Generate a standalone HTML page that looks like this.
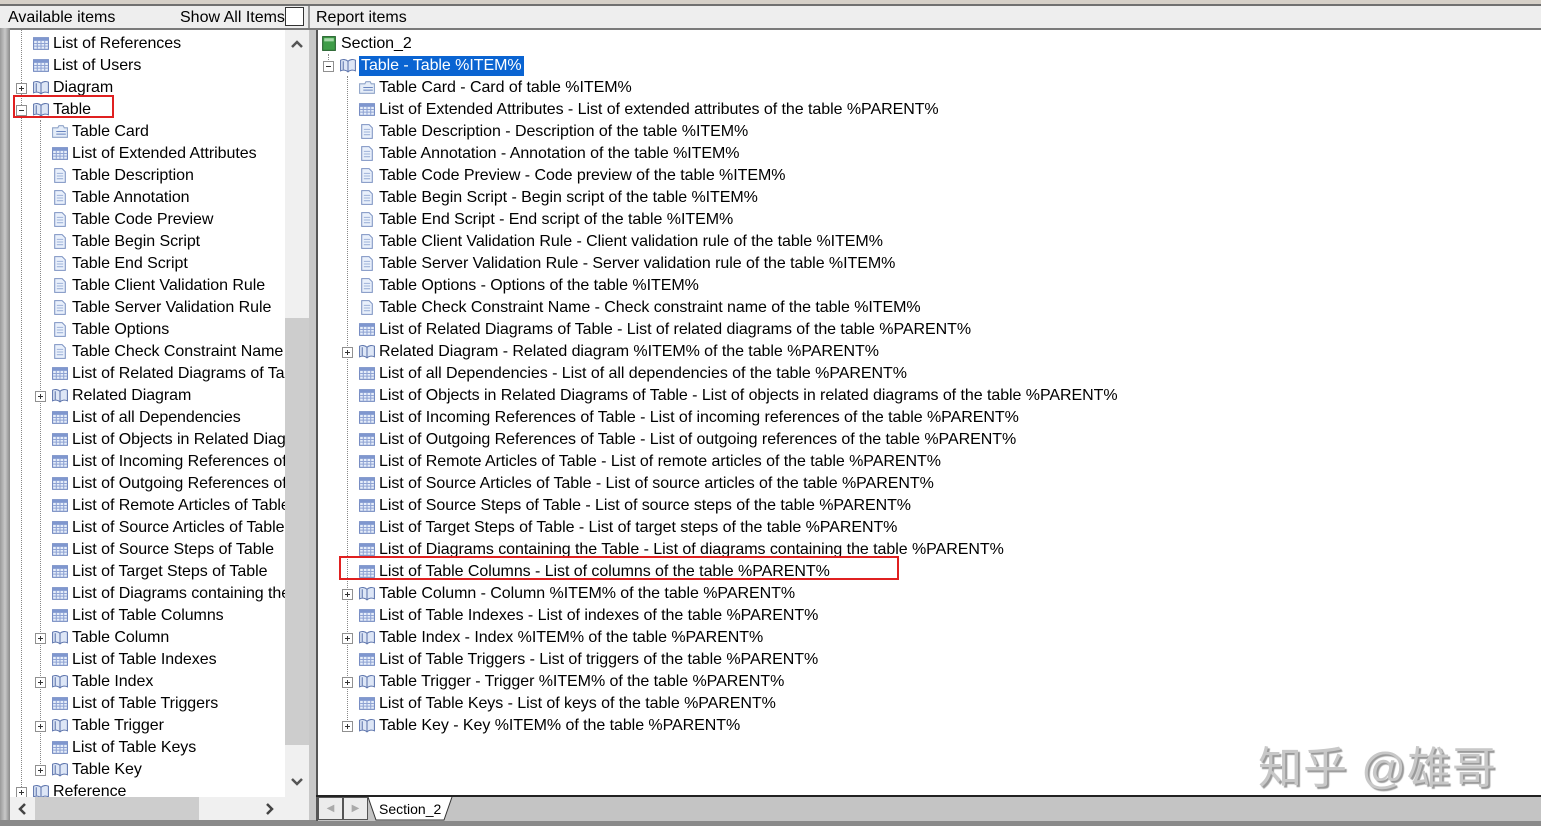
<!DOCTYPE html>
<html><head><meta charset="utf-8"><style>
*{margin:0;padding:0;box-sizing:border-box}
body{width:1541px;height:826px;overflow:hidden;background:#8a8a8a;font-family:"Liberation Sans",Arial,sans-serif;font-size:16px;color:#000;position:relative}
.abs{position:absolute}
.r{position:absolute;height:22px;line-height:22px;white-space:nowrap;letter-spacing:-0.05px}
.r svg{position:absolute;top:2px;left:-1px;width:18px;height:17px}
.r span{position:absolute;left:20px;top:0}
.ex{position:absolute;width:11px;height:11px;border:1px solid #909090;background:#fff;top:6px}
.ex:before{content:"";position:absolute;left:2px;top:4px;width:5px;height:1px;background:#333}
.ex.p:after{content:"";position:absolute;left:4px;top:2px;width:1px;height:5px;background:#333}
.vd{position:absolute;border-left:1px dotted #888}
</style></head><body>
<svg width="0" height="0" style="position:absolute">
<defs>
<symbol id="g" viewBox="0 0 17 16"><rect x="1.5" y="2.5" width="14" height="11" fill="#e6eefa" stroke="#6f86bf"/><rect x="1.5" y="2.5" width="14" height="3" fill="#7f97cf"/><path d="M5 5v8M8.5 5v8M12 5v8M2 8h13M2 10.5h13" stroke="#8fa3d3" stroke-width="1"/></symbol>
<symbol id="d" viewBox="0 0 17 16"><path d="M3.5 1.5h7l3 3v10h-10z" fill="#e9f0fb" stroke="#7d93c2"/><path d="M5.5 6h6M5.5 8.5h6M5.5 11h6" stroke="#9fb3d9"/></symbol>
<symbol id="c" viewBox="0 0 17 16"><path d="M1.5 4.5h5l1 -2h4l1 2h3v9h-14z" fill="#e5edf8" stroke="#8ea3c8"/><path d="M5 8h9M5 10.5h9" stroke="#6a86c0"/></symbol>
<symbol id="b" viewBox="0 0 17 16"><path d="M8.5 4c-2-2-5-2-7-1v10c2-1 5-1 7 1c2-2 5-2 7-1v-10c-2-1-5-1-7 1z" fill="#dde6f6" stroke="#5f76ad"/><path d="M8.5 4v10M4 4v8" stroke="#5f76ad"/></symbol>
<symbol id="s" viewBox="0 0 17 16"><rect x="2.5" y="1.5" width="12" height="13" fill="#3f9d48" stroke="#1f5e28"/><rect x="4" y="3" width="9" height="3" fill="#a6d9a9"/></symbol>
</defs></svg>
<div class="abs" style="left:0;top:0;width:1541px;height:4px;background:#d6d0c8"></div>
<div class="abs" style="left:0;top:4px;width:1541px;height:2px;background:#707070"></div>
<div class="abs" style="left:0;top:6px;width:1541px;height:22px;background:#eeeeee"></div>
<div class="abs" style="left:0;top:28px;width:1541px;height:2px;background:#7a7a7a"></div>
<div class="abs" style="left:8px;top:7px;line-height:22px">Available items</div>
<div class="abs" style="left:180px;top:7px;line-height:22px">Show All Items</div>
<div class="abs" style="left:285px;top:7px;width:19px;height:19px;border:1px solid #333;background:#fff"></div>
<div class="abs" style="left:308px;top:6px;width:2px;height:22px;background:#999"></div>
<div class="abs" style="left:316px;top:7px;line-height:22px">Report items</div>
<div class="abs" style="left:0;top:28px;width:10px;height:798px;background:linear-gradient(90deg,#9a9a9a,#c8c8c8 50%,#8a8a8a)"></div>
<div class="abs" style="left:10px;top:30px;width:275px;height:767px;background:#fff;overflow:hidden">
 <div class="vd" style="left:11px;top:0;height:767px"></div>
 <div class="vd" style="left:30px;top:90px;height:650px"></div>
</div>
<div class="abs" style="left:285px;top:30px;width:24px;height:767px;background:#f0f0f0"></div>
<div class="abs" style="left:285px;top:318px;width:24px;height:427px;background:#cdcdcd"></div>
<svg class="abs" style="left:290px;top:38px" width="14" height="12"><path d="M2 9L7 4L12 9" stroke="#555" stroke-width="2.5" fill="none"/></svg>
<svg class="abs" style="left:290px;top:776px" width="14" height="12"><path d="M2 3L7 8L12 3" stroke="#555" stroke-width="2.5" fill="none"/></svg>
<div class="abs" style="left:309px;top:30px;width:7px;height:796px;background:#c8c8c8"></div>
<div class="abs" style="left:10px;top:797px;width:299px;height:23px;background:#f0f0f0"></div>
<div class="abs" style="left:35px;top:797px;width:164px;height:23px;background:#cdcdcd"></div>
<svg class="abs" style="left:16px;top:802px" width="12" height="14"><path d="M9 2L4 7L9 12" stroke="#444" stroke-width="2.5" fill="none"/></svg>
<svg class="abs" style="left:264px;top:802px" width="12" height="14"><path d="M3 2L8 7L3 12" stroke="#444" stroke-width="2.5" fill="none"/></svg>
<div class="abs" style="left:0;top:820px;width:1541px;height:6px;background:#8a8a8a"></div>

<div class="abs" style="left:10px;top:30px;width:275px;height:767px;overflow:hidden">
<div class="abs" style="left:0;top:2px;width:275px;height:767px">
<div class="r" style="top:1px;left:23px"><svg><use href="#g"/></svg><span>List of References</span></div>
<div class="r" style="top:23px;left:23px"><svg><use href="#g"/></svg><span>List of Users</span></div>
<div class="r" style="top:45px;left:23px"><i class="ex p" style="left:-17px"></i><svg><use href="#b"/></svg><span>Diagram</span></div>
<div class="r" style="top:67px;left:23px"><i class="ex" style="left:-17px"></i><svg><use href="#b"/></svg><span>Table</span></div>
<div class="r" style="top:89px;left:42px"><svg><use href="#c"/></svg><span>Table Card</span></div>
<div class="r" style="top:111px;left:42px"><svg><use href="#g"/></svg><span>List of Extended Attributes</span></div>
<div class="r" style="top:133px;left:42px"><svg><use href="#d"/></svg><span>Table Description</span></div>
<div class="r" style="top:155px;left:42px"><svg><use href="#d"/></svg><span>Table Annotation</span></div>
<div class="r" style="top:177px;left:42px"><svg><use href="#d"/></svg><span>Table Code Preview</span></div>
<div class="r" style="top:199px;left:42px"><svg><use href="#d"/></svg><span>Table Begin Script</span></div>
<div class="r" style="top:221px;left:42px"><svg><use href="#d"/></svg><span>Table End Script</span></div>
<div class="r" style="top:243px;left:42px"><svg><use href="#d"/></svg><span>Table Client Validation Rule</span></div>
<div class="r" style="top:265px;left:42px"><svg><use href="#d"/></svg><span>Table Server Validation Rule</span></div>
<div class="r" style="top:287px;left:42px"><svg><use href="#d"/></svg><span>Table Options</span></div>
<div class="r" style="top:309px;left:42px"><svg><use href="#d"/></svg><span>Table Check Constraint Name</span></div>
<div class="r" style="top:331px;left:42px"><svg><use href="#g"/></svg><span>List of Related Diagrams of Table</span></div>
<div class="r" style="top:353px;left:42px"><i class="ex p" style="left:-17px"></i><svg><use href="#b"/></svg><span>Related Diagram</span></div>
<div class="r" style="top:375px;left:42px"><svg><use href="#g"/></svg><span>List of all Dependencies</span></div>
<div class="r" style="top:397px;left:42px"><svg><use href="#g"/></svg><span>List of Objects in Related Diagrams</span></div>
<div class="r" style="top:419px;left:42px"><svg><use href="#g"/></svg><span>List of Incoming References of</span></div>
<div class="r" style="top:441px;left:42px"><svg><use href="#g"/></svg><span>List of Outgoing References of</span></div>
<div class="r" style="top:463px;left:42px"><svg><use href="#g"/></svg><span>List of Remote Articles of Table</span></div>
<div class="r" style="top:485px;left:42px"><svg><use href="#g"/></svg><span>List of Source Articles of Table</span></div>
<div class="r" style="top:507px;left:42px"><svg><use href="#g"/></svg><span>List of Source Steps of Table</span></div>
<div class="r" style="top:529px;left:42px"><svg><use href="#g"/></svg><span>List of Target Steps of Table</span></div>
<div class="r" style="top:551px;left:42px"><svg><use href="#g"/></svg><span>List of Diagrams containing the</span></div>
<div class="r" style="top:573px;left:42px"><svg><use href="#g"/></svg><span>List of Table Columns</span></div>
<div class="r" style="top:595px;left:42px"><i class="ex p" style="left:-17px"></i><svg><use href="#b"/></svg><span>Table Column</span></div>
<div class="r" style="top:617px;left:42px"><svg><use href="#g"/></svg><span>List of Table Indexes</span></div>
<div class="r" style="top:639px;left:42px"><i class="ex p" style="left:-17px"></i><svg><use href="#b"/></svg><span>Table Index</span></div>
<div class="r" style="top:661px;left:42px"><svg><use href="#g"/></svg><span>List of Table Triggers</span></div>
<div class="r" style="top:683px;left:42px"><i class="ex p" style="left:-17px"></i><svg><use href="#b"/></svg><span>Table Trigger</span></div>
<div class="r" style="top:705px;left:42px"><svg><use href="#g"/></svg><span>List of Table Keys</span></div>
<div class="r" style="top:727px;left:42px"><i class="ex p" style="left:-17px"></i><svg><use href="#b"/></svg><span>Table Key</span></div>
<div class="r" style="top:749px;left:23px"><i class="ex p" style="left:-17px"></i><svg><use href="#b"/></svg><span>Reference</span></div>
</div>
</div>
<div class="abs" style="left:13px;top:95px;width:101px;height:23px;border:2px solid #e02020"></div>

<div class="abs" style="left:316px;top:30px;width:1225px;height:766px;background:#fff;border-left:2px solid #555;overflow:hidden">
 <div class="vd" style="left:10px;top:24px;height:12px"></div>
 <div class="vd" style="left:29px;top:46px;height:650px"></div>
<div class="abs" style="left:0;top:2px;width:1225px;height:764px">
<div class="r" style="top:1px;left:3px"><svg><use href="#s"/></svg><span>Section_2</span></div>
<div class="r" style="top:23px;left:22px"><i class="ex" style="left:-17px"></i><svg><use href="#b"/></svg><span style="background:#0a64d2;color:#fff;padding:0 2px;left:19px;line-height:20px;top:1px">Table - Table %ITEM%</span></div>
<div class="r" style="top:45px;left:41px"><svg><use href="#c"/></svg><span>Table Card - Card of table %ITEM%</span></div>
<div class="r" style="top:67px;left:41px"><svg><use href="#g"/></svg><span>List of Extended Attributes - List of extended attributes of the table %PARENT%</span></div>
<div class="r" style="top:89px;left:41px"><svg><use href="#d"/></svg><span>Table Description - Description of the table %ITEM%</span></div>
<div class="r" style="top:111px;left:41px"><svg><use href="#d"/></svg><span>Table Annotation - Annotation of the table %ITEM%</span></div>
<div class="r" style="top:133px;left:41px"><svg><use href="#d"/></svg><span>Table Code Preview - Code preview of the table %ITEM%</span></div>
<div class="r" style="top:155px;left:41px"><svg><use href="#d"/></svg><span>Table Begin Script - Begin script of the table %ITEM%</span></div>
<div class="r" style="top:177px;left:41px"><svg><use href="#d"/></svg><span>Table End Script - End script of the table %ITEM%</span></div>
<div class="r" style="top:199px;left:41px"><svg><use href="#d"/></svg><span>Table Client Validation Rule - Client validation rule of the table %ITEM%</span></div>
<div class="r" style="top:221px;left:41px"><svg><use href="#d"/></svg><span>Table Server Validation Rule - Server validation rule of the table %ITEM%</span></div>
<div class="r" style="top:243px;left:41px"><svg><use href="#d"/></svg><span>Table Options - Options of the table %ITEM%</span></div>
<div class="r" style="top:265px;left:41px"><svg><use href="#d"/></svg><span>Table Check Constraint Name - Check constraint name of the table %ITEM%</span></div>
<div class="r" style="top:287px;left:41px"><svg><use href="#g"/></svg><span>List of Related Diagrams of Table - List of related diagrams of the table %PARENT%</span></div>
<div class="r" style="top:309px;left:41px"><i class="ex p" style="left:-17px"></i><svg><use href="#b"/></svg><span>Related Diagram - Related diagram %ITEM% of the table %PARENT%</span></div>
<div class="r" style="top:331px;left:41px"><svg><use href="#g"/></svg><span>List of all Dependencies - List of all dependencies of the table %PARENT%</span></div>
<div class="r" style="top:353px;left:41px"><svg><use href="#g"/></svg><span>List of Objects in Related Diagrams of Table - List of objects in related diagrams of the table %PARENT%</span></div>
<div class="r" style="top:375px;left:41px"><svg><use href="#g"/></svg><span>List of Incoming References of Table - List of incoming references of the table %PARENT%</span></div>
<div class="r" style="top:397px;left:41px"><svg><use href="#g"/></svg><span>List of Outgoing References of Table - List of outgoing references of the table %PARENT%</span></div>
<div class="r" style="top:419px;left:41px"><svg><use href="#g"/></svg><span>List of Remote Articles of Table - List of remote articles of the table %PARENT%</span></div>
<div class="r" style="top:441px;left:41px"><svg><use href="#g"/></svg><span>List of Source Articles of Table - List of source articles of the table %PARENT%</span></div>
<div class="r" style="top:463px;left:41px"><svg><use href="#g"/></svg><span>List of Source Steps of Table - List of source steps of the table %PARENT%</span></div>
<div class="r" style="top:485px;left:41px"><svg><use href="#g"/></svg><span>List of Target Steps of Table - List of target steps of the table %PARENT%</span></div>
<div class="r" style="top:507px;left:41px"><svg><use href="#g"/></svg><span>List of Diagrams containing the Table - List of diagrams containing the table %PARENT%</span></div>
<div class="r" style="top:529px;left:41px"><svg><use href="#g"/></svg><span>List of Table Columns - List of columns of the table %PARENT%</span></div>
<div class="r" style="top:551px;left:41px"><i class="ex p" style="left:-17px"></i><svg><use href="#b"/></svg><span>Table Column - Column %ITEM% of the table %PARENT%</span></div>
<div class="r" style="top:573px;left:41px"><svg><use href="#g"/></svg><span>List of Table Indexes - List of indexes of the table %PARENT%</span></div>
<div class="r" style="top:595px;left:41px"><i class="ex p" style="left:-17px"></i><svg><use href="#b"/></svg><span>Table Index - Index %ITEM% of the table %PARENT%</span></div>
<div class="r" style="top:617px;left:41px"><svg><use href="#g"/></svg><span>List of Table Triggers - List of triggers of the table %PARENT%</span></div>
<div class="r" style="top:639px;left:41px"><i class="ex p" style="left:-17px"></i><svg><use href="#b"/></svg><span>Table Trigger - Trigger %ITEM% of the table %PARENT%</span></div>
<div class="r" style="top:661px;left:41px"><svg><use href="#g"/></svg><span>List of Table Keys - List of keys of the table %PARENT%</span></div>
<div class="r" style="top:683px;left:41px"><i class="ex p" style="left:-17px"></i><svg><use href="#b"/></svg><span>Table Key - Key %ITEM% of the table %PARENT%</span></div>
</div>
<div class="abs" style="left:940px;top:702px;font-family:'Liberation Sans','Noto Sans CJK SC',sans-serif;font-size:44px;color:#c8c8c8;text-shadow:2px 2px 1px #999;letter-spacing:1px">知乎 @雄哥</div>
</div>
<div class="abs" style="left:339px;top:556px;width:560px;height:24px;border:2px solid #e02020"></div>
<div class="abs" style="left:316px;top:795px;width:1225px;height:2px;background:#222"></div>
<div class="abs" style="left:316px;top:797px;width:1225px;height:24px;background:#c4c4c4;border-left:2px solid #555"></div>
<div class="abs" style="left:318px;top:797px;width:25px;height:23px;background:#ececec;border:1px solid #555;color:#aaa;font-size:10px;line-height:21px;text-align:center">&#9664;</div>
<div class="abs" style="left:343px;top:797px;width:25px;height:23px;background:#ececec;border:1px solid #555;color:#aaa;font-size:10px;line-height:21px;text-align:center">&#9654;</div>
<svg class="abs" style="left:368px;top:797px" width="90" height="24"><path d="M0 0L8 23H76L84 0" fill="#fff" stroke="#333"/></svg>
<div class="abs" style="left:379px;top:798px;font-size:14px;line-height:22px">Section_2</div>
</body></html>
